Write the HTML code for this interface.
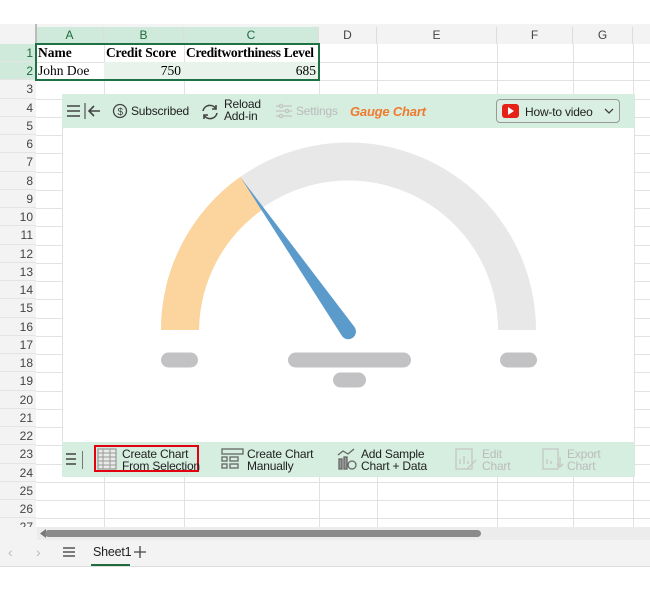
<!DOCTYPE html>
<html><head><style>
*{margin:0;padding:0;box-sizing:border-box}
body{width:650px;height:596px;background:#fff;position:relative;overflow:hidden;font-family:"Liberation Sans",sans-serif}
.a{position:absolute}
.ch{position:absolute;top:27px;height:17px;font-size:12px;color:#444;text-align:center;line-height:17px;border-right:1px solid #ddd}
.rh{position:absolute;left:0;width:36px;height:18.24px;font-size:12px;color:#444;text-align:right;padding-right:3px;line-height:18px;border-bottom:1px solid #e4e4e4}
.vl{position:absolute;top:44px;height:483px;width:1px;background:#e2e2e2}
.hl{position:absolute;left:36px;width:614px;height:1px;background:#e2e2e2}
.cell{position:absolute;font-family:"Liberation Serif",serif;font-size:13.5px;color:#000;line-height:18px;white-space:nowrap}
.tb{font-size:12px;color:#222;line-height:12px;font-family:"Liberation Sans",sans-serif;letter-spacing:-0.2px;white-space:nowrap}
.dis{color:#bbb}
</style></head><body>
<div class="a" style="left:0;top:24px;width:650px;height:20px;background:#f3f3f3"></div>
<div class="a" style="left:36px;top:27px;width:283px;height:17px;background:#cfeadb"></div>
<div class="a" style="left:0;top:44px;width:36px;height:483px;background:#f3f3f3"></div>
<div class="a" style="left:0;top:44px;width:36px;height:36px;background:#cfeadb"></div>
<div class="a" style="left:35px;top:24px;width:2px;height:20px;background:#bbb"></div>
<div class="ch" style="left:36px;width:68px;color:#1e6b3e">A</div>
<div class="ch" style="left:104px;width:80px;color:#1e6b3e">B</div>
<div class="ch" style="left:184px;width:135px;color:#1e6b3e">C</div>
<div class="ch" style="left:319px;width:58px">D</div>
<div class="ch" style="left:377px;width:120px">E</div>
<div class="ch" style="left:497px;width:76px">F</div>
<div class="ch" style="left:573px;width:60px">G</div>
<div class="vl" style="left:104px"></div><div class="vl" style="left:184px"></div><div class="vl" style="left:319px"></div><div class="vl" style="left:377px"></div><div class="vl" style="left:497px"></div><div class="vl" style="left:573px"></div><div class="vl" style="left:633px"></div>
<div id="rows"></div>
<script>
var h='';for(var i=1;i<=27;i++){var t=44+(i-1)*18.24;h+='<div class="rh" style="top:'+t+'px;'+(i<=2?'color:#1e6b3e':'')+'">'+i+'</div><div class="hl" style="top:'+(t+18.24)+'px"></div>';}
document.getElementById('rows').innerHTML=h;
</script>
<div class="a" style="left:104px;top:62px;width:215px;height:18px;background:#e8f3ec"></div>
<div class="cell" style="left:38px;top:44px;font-weight:bold">Name</div>
<div class="cell" style="left:106px;top:44px;font-weight:bold;letter-spacing:-0.2px">Credit Score</div>
<div class="cell" style="left:186px;top:44px;font-weight:bold;letter-spacing:-0.3px">Creditworthiness Level</div>
<div class="cell" style="left:38px;top:62px">John Doe</div>
<div class="cell" style="left:104px;top:62px;width:77px;text-align:right">750</div>
<div class="cell" style="left:184px;top:62px;width:132px;text-align:right">685</div>
<div class="a" style="left:35px;top:43px;width:285px;height:38px;border:2px solid #1e7145"></div>
<div class="a" style="left:62px;top:94px;width:573px;height:383px;background:#fff;border:1px solid #e0e0e0"></div>
<div class="a" style="left:62px;top:94px;width:573px;height:34px;background:#d5eee0"></div>
<div class="a" style="left:62px;top:442px;width:573px;height:35px;background:#d5eee0"></div>
<svg class="a" style="left:62px;top:94px" width="140" height="34">
<g stroke="#444" stroke-width="1.6" fill="none"><path d="M5 12h13M5 17h13M5 22h13"/><path d="M23 9v16" stroke="#777"/><path d="M28 17h10M32 12l-5 5 5 5"/>
<circle cx="58" cy="17" r="6.5" stroke-width="1.3"/></g>
<text x="55.5" y="21" font-size="10" fill="#444" font-family="Liberation Sans">$</text>
</svg>
<div class="a tb" style="left:131px;top:105px">Subscribed</div>
<svg class="a" style="left:200px;top:102px" width="20" height="20"><g stroke="#444" stroke-width="1.6" fill="none"><path d="M3 9a7 7 0 0 1 13-2M17 11a7 7 0 0 1-13 2"/><path d="M16 3v4h-4M4 17v-4h4"/></g></svg>
<div class="a tb" style="left:224px;top:98px">Reload<br>Add-in</div>
<svg class="a" style="left:275px;top:103px" width="18" height="16"><g stroke="#c4c4c4" stroke-width="1.3" fill="none"><path d="M1 3h16M1 8h16M1 13h16"/><circle cx="6" cy="3" r="1.6" fill="#d5eee0"/><circle cx="12" cy="8" r="1.6" fill="#d5eee0"/><circle cx="6" cy="13" r="1.6" fill="#d5eee0"/></g></svg>
<div class="a tb dis" style="left:296px;top:105px">Settings</div>
<div class="a" style="left:350px;top:104px;font-size:13px;font-weight:bold;font-style:italic;color:#f07a2e;letter-spacing:-0.2px">Gauge Chart</div>
<div class="a" style="left:496px;top:99px;width:124px;height:24px;border:1px solid #999;border-radius:4px;background:#d9efe3"></div>
<div class="a" style="left:502px;top:104px;width:17px;height:14px;background:#e62117;border-radius:3px"></div>
<svg class="a" style="left:507px;top:107px" width="8" height="8"><path d="M1 0l6 4-6 4z" fill="#fff"/></svg>
<div class="a tb" style="left:525px;top:106px">How-to video</div>
<svg class="a" style="left:604px;top:108px" width="10" height="6"><path d="M1 1l4 4 4-4" stroke="#444" fill="none" stroke-width="1.3"/></svg>
<svg class="a" style="left:0;top:0" width="650" height="596">
<path d="M161 330A187.5 187.5 0 0 1 536 330L498 330A149.5 149.5 0 0 0 199 330Z" fill="#e8e8e8"/>
<path d="M161 330A187.5 187.5 0 0 1 240.6 176.6L262.8 209.4A149.5 149.5 0 0 0 199 330Z" fill="#fcd49d"/>
<path d="M241 178L354.5 327A7 7 0 0 1 342 336Z" fill="#5b9bcb"/>
<g stroke="#c2c2c4" stroke-linecap="round" stroke-width="15">
<path d="M168.5 360h22M295.5 360h108M507.5 360h22M340.5 380h18"/></g>
</svg>
<svg class="a" style="left:62px;top:442px" width="14" height="35"><g stroke="#444" stroke-width="1.6"><path d="M4 12h11M4 17h11M4 22h11"/></g></svg>
<div class="a" style="left:82px;top:451px;width:1px;height:18px;background:#777"></div>
<div class="a" style="left:94px;top:445px;width:105px;height:27px;border:2px solid #e3000f"></div>
<svg class="a" style="left:97px;top:448px" width="20" height="22"><g stroke="#888" stroke-width="1" fill="#e8ece9"><rect x="1" y="1" width="18" height="20"/></g><g stroke="#999" stroke-width="1"><path d="M1 5h18M1 9h18M1 13h18M1 17h18M6 1v20M13 1v20"/></g></svg>
<div class="a tb" style="left:122px;top:448px">Create Chart<br>From Selection</div>
<svg class="a" style="left:221px;top:447px" width="24" height="24"><g stroke="#666" stroke-width="1.3" fill="none"><rect x="1" y="2" width="21" height="5"/><rect x="1" y="10" width="5" height="4"/><rect x="9" y="10" width="8" height="4"/><rect x="1" y="17" width="5" height="4"/><rect x="9" y="17" width="8" height="4"/></g></svg>
<div class="a tb" style="left:247px;top:448px">Create Chart<br>Manually</div>
<svg class="a" style="left:336px;top:447px" width="22" height="24"><g stroke="#666" stroke-width="1.3" fill="none"><path d="M2 8l5-4 5 3 6-5"/><rect x="3" y="12" width="3" height="10" fill="#999"/><rect x="8" y="10" width="3" height="12" fill="#999"/><circle cx="16" cy="18" r="4" fill="#d5eee0"/></g></svg>
<div class="a tb" style="left:361px;top:448px">Add Sample<br>Chart + Data</div>
<svg class="a" style="left:455px;top:447px" width="22" height="24"><g stroke="#c6c6c6" stroke-width="1.3" fill="none"><rect x="1" y="2" width="16" height="20"/><path d="M5 17v-5M9 17v-8M13 17v-3M12 22l9-9"/></g></svg>
<div class="a tb dis" style="left:482px;top:448px">Edit<br>Chart</div>
<svg class="a" style="left:542px;top:447px" width="22" height="24"><g stroke="#c6c6c6" stroke-width="1.3" fill="none"><rect x="1" y="2" width="15" height="20"/><path d="M5 17v-5M9 17v-3M18 10v10M15 17l3 3 3-3"/></g></svg>
<div class="a tb dis" style="left:567px;top:448px">Export<br>Chart</div>
<div class="a" style="left:0;top:527px;width:650px;height:13px;background:#f3f3f3"></div>
<div class="a" style="left:37px;top:527px;width:613px;height:13px;background:#ececec"></div>
<svg class="a" style="left:40px;top:529px" width="8" height="9"><path d="M6 0v9L0 4.5z" fill="#777"/></svg>
<div class="a" style="left:45px;top:530px;width:436px;height:7px;background:#8a8a8a;border-radius:4px"></div>
<div class="a" style="left:0;top:540px;width:650px;height:27px;background:#f3f3f3;border-bottom:1px solid #ddd"></div>
<div class="a" style="left:8px;top:544px;font-size:14px;color:#bbb">&#8249;</div>
<div class="a" style="left:36px;top:544px;font-size:14px;color:#bbb">&#8250;</div>
<svg class="a" style="left:63px;top:547px" width="12" height="10"><g stroke="#555" stroke-width="1.4"><path d="M0 1h12M0 5h12M0 9h12"/></g></svg>
<div class="a tb" style="left:93px;top:546px;font-size:12.5px">Sheet1</div>
<svg class="a" style="left:134px;top:546px" width="12" height="12"><g stroke="#444" stroke-width="1.3"><path d="M6 0v12M0 6h12"/></g></svg>
<div class="a" style="left:91px;top:564px;width:39px;height:2px;background:#1e6b3e"></div>
</body></html>
